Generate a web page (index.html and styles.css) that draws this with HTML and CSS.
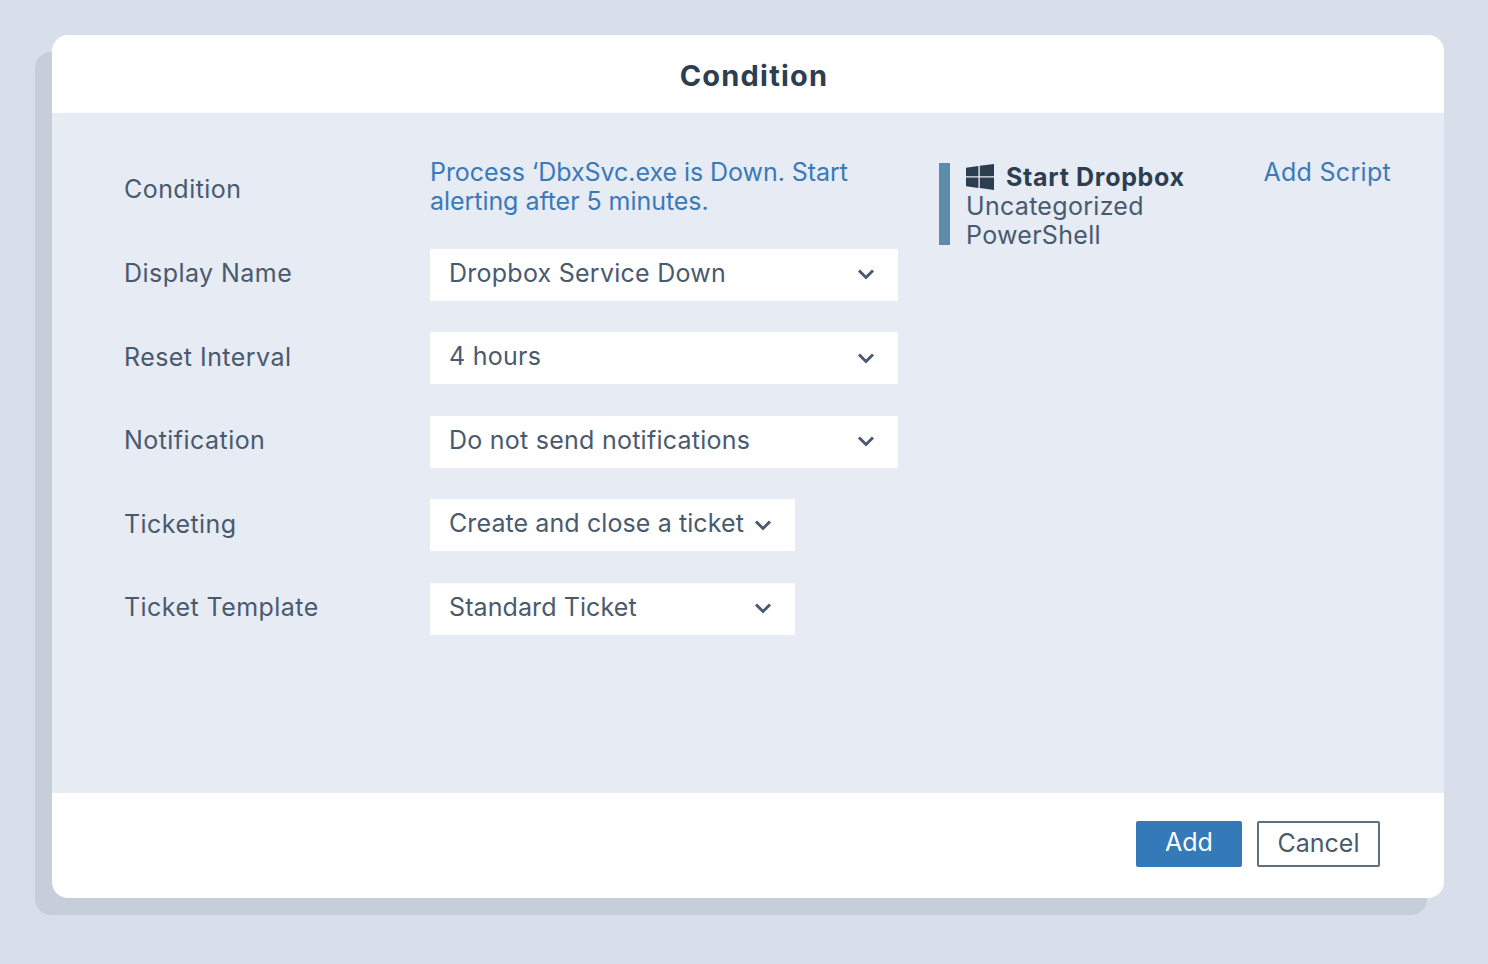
FILE: index.html
```html
<!DOCTYPE html>
<html lang="en">
<head>
  <meta charset="UTF-8">
  <meta name="viewport" content="width=device-width, initial-scale=1.0">
  <title>Condition</title>
  <link rel="stylesheet" href="styles.css">
</head>
<body>
  <div class="dialog">
    <div class="dialog-header">Condition</div>

    <div class="dialog-body">
      <!-- form -->
      <div class="form">
        <div class="form-row condition-row">
          <span class="form-label">Condition</span>
          <a class="condition-link">Process ‘DbxSvc.exe is Down. Start alerting after 5 minutes.</a>
        </div>
        <div class="form-row">
          <span class="form-label">Display Name</span>
          <div class="select">
            <span>Dropbox Service Down</span>
            <svg class="chevron" viewBox="0 0 18 12"><path d="M2 2.5 9 9.5 16 2.5"/></svg>
          </div>
        </div>
        <div class="form-row">
          <span class="form-label">Reset Interval</span>
          <div class="select">
            <span>4 hours</span>
            <svg class="chevron" viewBox="0 0 18 12"><path d="M2 2.5 9 9.5 16 2.5"/></svg>
          </div>
        </div>
        <div class="form-row">
          <span class="form-label">Notification</span>
          <div class="select">
            <span>Do not send notifications</span>
            <svg class="chevron" viewBox="0 0 18 12"><path d="M2 2.5 9 9.5 16 2.5"/></svg>
          </div>
        </div>
        <div class="form-row">
          <span class="form-label">Ticketing</span>
          <div class="select select-small">
            <span>Create and close a ticket</span>
            <svg class="chevron" viewBox="0 0 18 12"><path d="M2 2.5 9 9.5 16 2.5"/></svg>
          </div>
        </div>
        <div class="form-row">
          <span class="form-label">Ticket Template</span>
          <div class="select select-small">
            <span>Standard Ticket</span>
            <svg class="chevron" viewBox="0 0 18 12"><path d="M2 2.5 9 9.5 16 2.5"/></svg>
          </div>
        </div>
      </div>

      <!-- script panel -->
      <div class="script-panel">
        <div class="script-card">
          <div class="script-name">
            <svg class="windows-icon" viewBox="0 0 28 26"><path d="M0 3.8 12.4 2V12.2H0ZM13.8 1.8 28 0V12.2H13.8ZM0 13.6H12.4V23.9L0 22.2ZM13.8 13.6H28V26L13.8 24.1Z"/></svg>
            <span>Start Dropbox</span>
          </div>
          <div>Uncategorized</div>
          <div>PowerShell</div>
        </div>
        <a class="add-script">Add Script</a>
      </div>
    </div>

    <div class="dialog-footer">
      <button class="btn btn-primary">Add</button>
      <button class="btn btn-outline">Cancel</button>
    </div>
  </div>
</body>
</html>
```

FILE: styles.css
```css
body { margin: 0; min-height: 100vh; box-sizing: border-box; padding: 35px 44px 0 52px; background: #d8deea; font-family: Inter, "Open Sans", sans-serif; font-size: 25px; color: #4a5a6e; }
.dialog { height: 863px; display: flex; flex-direction: column; border-radius: 16px; background: #fff; box-shadow: -17px 17px 0 #c6ced9; }
.dialog-header { height: 78px; flex: none; display: flex; align-items: center; justify-content: center; padding: 3px 0 0 12px; box-sizing: border-box; font-size: 29px; font-weight: 700; color: #2c3e50; letter-spacing: 1.2px; }
.dialog-body { flex: 1; display: flex; background: #e6ebf4; padding: 44px 53px 0 72px; }
.dialog-footer { height: 105px; flex: none; box-sizing: border-box; display: flex; justify-content: flex-end; gap: 15px; padding: 28px 64px 0 0; }

/* form */
.form { width: 774px; flex: none; display: flex; flex-direction: column; gap: 31.5px; }
.form-row { display: flex; align-items: center; }
.form-label { width: 306px; flex: none; padding-bottom: 3px; letter-spacing: 0.45px; }
.condition-row { height: 60px; box-sizing: border-box; }
.condition-row .form-label { padding-top: 4px; padding-bottom: 0; }
.condition-link { width: 440px; line-height: 29px; color: #3a7ab8; letter-spacing: -0.05px; }
.select { width: 468px; height: 52px; box-sizing: border-box; background: #fff; display: flex; align-items: center; justify-content: space-between; padding: 0 23px 4px 19px; letter-spacing: 0.25px; }
.select-small { width: 365px; letter-spacing: 0.1px; }
.chevron { width: 18px; height: 12px; margin-top: 3px; fill: none; stroke: #4a5a6e; stroke-width: 3; }

/* script panel */
.script-panel { flex: 1; display: flex; justify-content: space-between; align-items: flex-start; margin-left: 41px; padding-top: 6px; }
.script-card { border-left: 11px solid #5b8cab; padding-left: 16px; line-height: 29px; height: 82px; color: #4a5a6e; letter-spacing: 0.3px; }
.script-name { display: flex; align-items: center; gap: 12px; font-weight: 700; color: #2c3e50; letter-spacing: 0.7px; }
.windows-icon { width: 28px; height: 26px; fill: #2c3e50; margin-top: -2px; }
.add-script { color: #3a7ab8; margin-top: -6px; letter-spacing: 0.3px; }

/* buttons */
.btn { height: 46px; box-sizing: border-box; font-family: inherit; font-size: 25px; border-radius: 2px; padding: 0 0 3px; }
.btn-primary { width: 106px; background: #347ab8; color: #fff; border: none; padding-bottom: 5px; }
.btn-outline { width: 123px; background: #fff; color: #4a5a6e; border: 2px solid #5f6e80; }
```
